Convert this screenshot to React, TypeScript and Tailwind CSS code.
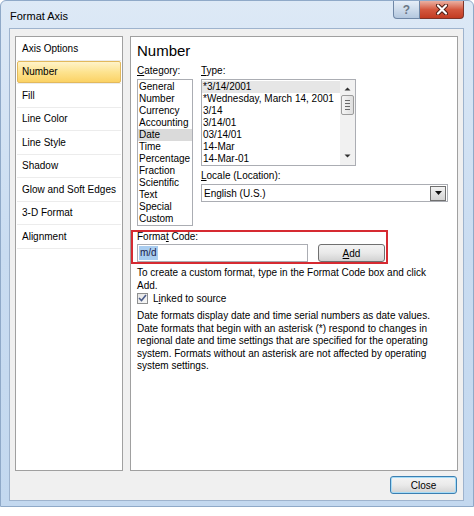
const sidebarItems = [
  "Axis Options",
  "Number",
  "Fill",
  "Line Color",
  "Line Style",
  "Shadow",
  "Glow and Soft Edges",
  "3-D Format",
  "Alignment",
];

const categories = [
  "General",
  "Number",
  "Currency",
  "Accounting",
  "Date",
  "Time",
  "Percentage",
  "Fraction",
  "Scientific",
  "Text",
  "Special",
  "Custom",
];

const types = [
  "*3/14/2001",
  "*Wednesday, March 14, 2001",
  "3/14",
  "3/14/01",
  "03/14/01",
  "14-Mar",
  "14-Mar-01",
];

export default function App() {
  return (
    <div className="w-[474px] h-[516px] bg-white overflow-hidden font-['Liberation_Sans',Arial,sans-serif] text-[10px] text-black">
      <div className="h-[507px] flex flex-col rounded-t-[6px] border border-[#8fa9c8] bg-gradient-to-b from-[#dde9f6] via-[#c9dcf1] to-[#c3d8ef]">
        {/* Title bar */}
        <div className="h-[27px] flex items-start justify-between">
          <div className="pl-[9px] pt-[9px] text-[11px] leading-[13px]">Format Axis</div>
          <div className="flex mr-[9px]">
            <div className="w-[27px] h-[18px] flex items-center justify-center rounded-bl-[4px] border border-t-0 border-[#6f87a6] bg-gradient-to-b from-[#e6eef8] via-[#cddbeb] to-[#b3c7de] text-[12px] leading-none font-bold text-[#6b7785]">
              ?
            </div>
            <div className="w-[44px] h-[18px] flex items-center justify-center rounded-br-[4px] border border-t-0 border-l-0 border-[#7e3328] bg-gradient-to-b from-[#eab0a2] via-[#d4583f] to-[#c23b22]">
              <svg width="14" height="11" viewBox="0 0 14 11">
                <path d="M3 1.5 L11 9.5 M11 1.5 L3 9.5" stroke="#4a1a12" strokeWidth="4" strokeLinecap="round" />
                <path d="M3 1.5 L11 9.5 M11 1.5 L3 9.5" stroke="#ffffff" strokeWidth="2.2" strokeLinecap="round" />
              </svg>
            </div>
          </div>
        </div>

        {/* Body */}
        <div className="flex-1 mb-[5px] ml-[8px] mr-[9px] flex flex-col border border-[#9eb3cd] bg-[#f0f0f0] px-[5px] pt-[7px]">
          <div className="flex-1 flex gap-[7px] min-h-0">
            {/* Left nav */}
            <div className="w-[108px] border border-[#a0a0a0] bg-white">
              {sidebarItems.map((item) => (
                <div key={item} className="h-[23.5px] mx-[1px] flex border-b border-[#ececec]">
                  {item === "Number" ? (
                    <div className="flex-1 flex items-center pl-[4px] rounded-[2px] border border-[#e3b95c] bg-gradient-to-b from-[#fff3c9] via-[#fde38f] to-[#fbd264]">
                      {item}
                    </div>
                  ) : (
                    <div className="flex-1 flex items-center pl-[5px]">{item}</div>
                  )}
                </div>
              ))}
            </div>

            {/* Right panel */}
            <div className="flex-1 flex flex-col border border-[#a0a0a0] bg-white pl-[6px] pt-[5px]">
              <div className="text-[15px] leading-[18px]">Number</div>

              <div className="mt-[5px] flex gap-[8px]">
                <div className="flex flex-col">
                  <div className="leading-[12px]">
                    <span className="underline">C</span>ategory:
                  </div>
                  <div className="mt-[2px] w-[56px] h-[147px] border border-[#abadb3] py-[1px]">
                    {categories.map((c) => (
                      <div key={c} className={`leading-[12px] pl-[1px] ${c === "Date" ? "bg-[#dadada]" : ""}`}>
                        {c}
                      </div>
                    ))}
                  </div>
                </div>

                <div className="flex flex-col">
                  <div className="leading-[12px]">
                    <span className="underline">T</span>ype:
                  </div>
                  <div className="mt-[2px] w-[155px] h-[87px] flex border border-[#abadb3]">
                    <div className="flex-1 pt-[1px]">
                      {types.map((t, i) => (
                        <div key={t} className={`leading-[12px] pl-[1px] whitespace-nowrap ${i === 0 ? "bg-[#e6e6e6]" : ""}`}>
                          {t}
                        </div>
                      ))}
                    </div>
                    <div className="w-[15px] flex flex-col items-center bg-[#f1f1f1]">
                      <svg className="mt-[7px]" width="7" height="4" viewBox="0 0 7 4">
                        <path d="M0.5 3.5 L3.5 0.5 L6.5 3.5 Z" fill="#303030" />
                      </svg>
                      <div className="mt-[4px] w-[13px] h-[20px] flex flex-col items-center justify-center gap-[2px] rounded-[2px] border border-[#9c9c9c] bg-gradient-to-r from-[#f5f5f5] to-[#dedede]">
                        <div className="w-[5px] h-px bg-[#6a6a6a]" />
                        <div className="w-[5px] h-px bg-[#6a6a6a]" />
                        <div className="w-[5px] h-px bg-[#6a6a6a]" />
                        <div className="w-[5px] h-px bg-[#6a6a6a]" />
                      </div>
                      <svg className="mt-auto mb-[7px]" width="7" height="4" viewBox="0 0 7 4">
                        <path d="M0.5 0.5 L3.5 3.5 L6.5 0.5 Z" fill="#303030" />
                      </svg>
                    </div>
                  </div>

                  <div className="mt-[4px] leading-[12px]">
                    <span className="underline">L</span>ocale (Location):
                  </div>
                  <div className="mt-[2px] w-[247px] h-[18px] flex items-center border border-[#abadb3] pl-[2px] pr-px">
                    <span>English (U.S.)</span>
                    <div className="ml-auto w-[16px] h-[15px] flex items-center justify-center border border-[#707070] bg-gradient-to-b from-[#f2f2f2] to-[#d4d4d4]">
                      <svg width="7" height="4" viewBox="0 0 7 4">
                        <path d="M0 0 L7 0 L3.5 4 Z" fill="#111111" />
                      </svg>
                    </div>
                  </div>
                </div>
              </div>

              {/* Format code */}
              <div className="mt-[4px] -ml-[6px] w-[257px] border-2 border-[#d62a31] pl-[4px] pr-[1px]">
                <div className="leading-[10px]">
                  Forma<span className="underline">t</span> Code:
                </div>
                <div className="mt-[2px] flex items-start">
                  <div className="w-[171px] h-[18px] flex items-center border border-[#abadb3] bg-white pl-px">
                    <span className="bg-[#a9cdf0] text-[#1b1b4a] leading-[14px] px-px">m/d</span>
                  </div>
                  <div className="ml-[10px] w-[67px] h-[18px] flex items-center justify-center rounded-[3px] border border-[#707070] bg-gradient-to-b from-[#f3f3f3] via-[#e9e9e9] to-[#d2d2d2]">
                    <span>
                      <span className="underline">A</span>dd
                    </span>
                  </div>
                </div>
              </div>

              <div className="mt-[2px] leading-[13px] whitespace-nowrap">
                To create a custom format, type in the Format Code box and click
                <br />
                Add.
              </div>

              <div className="h-[12px] flex items-center">
                <div className="w-[11px] h-[11px] flex items-center justify-center border border-[#8e8f8f] bg-gradient-to-br from-[#e4e4e4] to-[#f8f8f8]">
                  <svg width="9" height="8" viewBox="0 0 9 8">
                    <path d="M1 4 L3.5 6.5 L8 1" stroke="#4b5c8a" strokeWidth="1.6" fill="none" />
                  </svg>
                </div>
                <span className="ml-[5px]">
                  L<span className="underline">i</span>nked to source
                </span>
              </div>

              <div className="mt-[6px] leading-[12.5px] whitespace-nowrap">
                Date formats display date and time serial numbers as date values.
                <br />
                Date formats that begin with an asterisk (*) respond to changes in
                <br />
                regional date and time settings that are specified for the operating
                <br />
                system. Formats without an asterisk are not affected by operating
                <br />
                system settings.
              </div>
            </div>
          </div>

          {/* Footer */}
          <div className="flex justify-end pt-[5px] pb-[6px] pr-px">
            <div className="w-[67px] h-[18px] flex items-center justify-center rounded-[3px] border border-[#3c7fb1] bg-gradient-to-b from-[#f4f4f4] via-[#eaeaea] to-[#d3d3d3] shadow-[inset_0_0_0_1px_#a6dcf7]">
              Close
            </div>
          </div>
        </div>
      </div>
    </div>
  );
}
